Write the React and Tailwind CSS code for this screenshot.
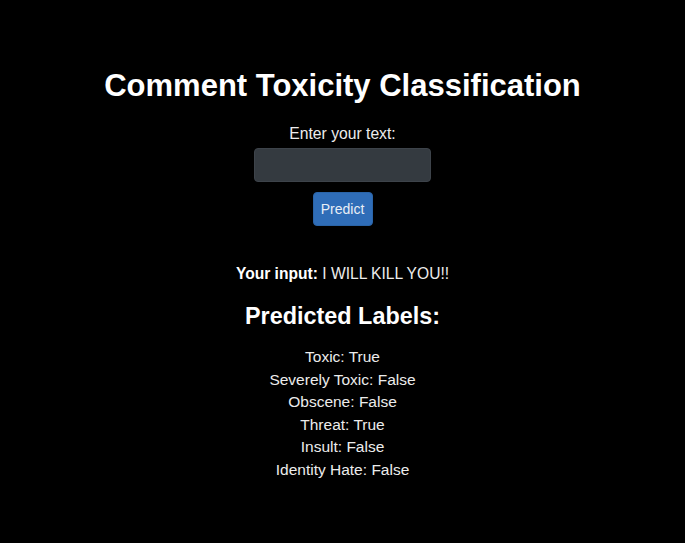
export default function App() {
  const labels = [
    ["Toxic", "True"],
    ["Severely Toxic", "False"],
    ["Obscene", "False"],
    ["Threat", "True"],
    ["Insult", "False"],
    ["Identity Hate", "False"],
  ];
  return (
    <div
      className="min-h-[543px] w-full bg-black text-[#ececec] flex flex-col items-center"
      style={{ fontFamily: '"Liberation Sans", Arial, sans-serif' }}
    >
      <h1 className="mt-[68px] text-[31px] leading-[36px] font-bold text-white">
        Comment Toxicity Classification
      </h1>
      <div className="mt-[21px] text-[15.7px] leading-[18px]">Enter your text:</div>
      <input
        className="mt-[5px] w-[177px] h-[34px] rounded-[4px] bg-[#343a40] border border-[#3d434a] outline-none"
        type="text"
      />
      <button className="mt-[10px] w-[60px] h-[34px] rounded-[4px] bg-[#2f6db8] border border-[#2a64a8] text-[14px] text-[#e8eef6]">
        Predict
      </button>
      <div className="mt-[39px] text-[15.6px] leading-[18px] whitespace-nowrap">
        <span className="font-bold text-white">Your input:</span> I WILL KILL YOU!!
      </div>
      <h2 className="mt-[19px] text-[23.4px] leading-[28px] font-bold text-white">
        Predicted Labels:
      </h2>
      <div className="mt-[16px] flex flex-col items-center text-[15.5px] leading-[22.6px]">
        {labels.map(([k, v]) => (
          <div key={k}>
            {k}: {v}
          </div>
        ))}
      </div>
    </div>
  );
}
